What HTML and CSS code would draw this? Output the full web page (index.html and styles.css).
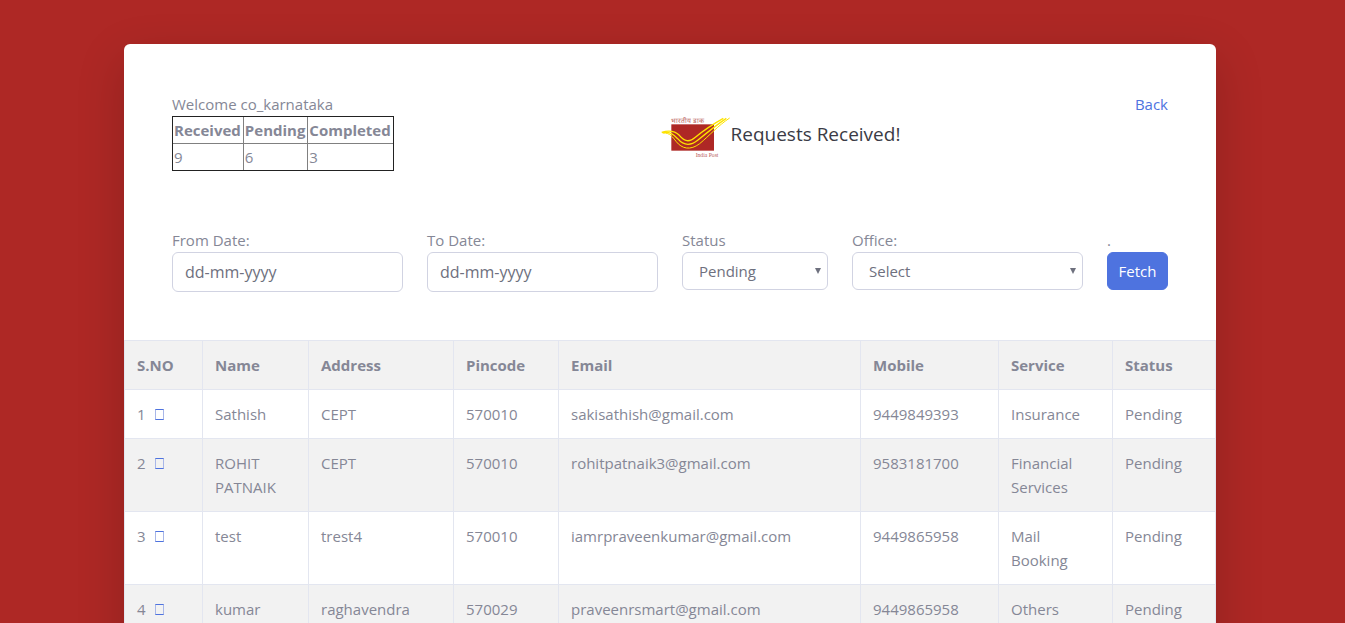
FILE: index.html
```
<!DOCTYPE html>
<html lang="en">
<head>
  <meta charset="utf-8">
  <meta name="viewport" content="width=device-width, initial-scale=1">
  <title>Requests Received</title>
  <link rel="stylesheet" href="styles.css">
</head>
<body>
  <div class="container">
    <div class="card">
      <div class="card-header">
        <div class="summary">
          <div>Welcome co_karnataka</div>
          <table class="counts">
            <tr><th>Received</th><th>Pending</th><th>Completed</th></tr>
            <tr><td>9</td><td>6</td><td>3</td></tr>
          </table>
        </div>
        <div class="title">
          <svg class="logo" viewBox="18 18 207 129" role="img" aria-label="India Post">
            <text x="49" y="38" font-size="20" fill="#b85a58">भारतीय डाक</text>
            <rect x="49" y="43" width="128" height="79" fill="#ae2825"/>
            <g fill="none" stroke="#fde300" stroke-width="4">
              <path d="M20 67C44 60 60 63 73 76C89 95 102 98 122 81C151 57 178 40 205 25"/>
              <path d="M21 68C46 64 56 74 68 86C85 106 104 110 128 91C157 67 184 45 214 25"/>
              <path d="M24 69C46 68 53 82 63 94C81 117 106 122 134 101C164 76 188 48 224 24" stroke-width="3"/>
            </g>
            <text x="122" y="140" font-size="17" fill="#b85a58">India Post</text>
          </svg>
          <h1>Requests Received!</h1>
        </div>
        <a class="back" href="#">Back</a>
      </div>

      <form class="filters">
        <div class="field">
          <label for="fromDate">From Date:</label>
          <input id="fromDate" type="text" placeholder="dd-mm-yyyy">
        </div>
        <div class="field">
          <label for="toDate">To Date:</label>
          <input id="toDate" type="text" placeholder="dd-mm-yyyy">
        </div>
        <div class="field">
          <label for="status">Status</label>
          <div class="select-wrapper">
            <select id="status">
              <option>Pending</option>
              <option>Completed</option>
            </select>
          </div>
        </div>
        <div class="field">
          <label for="office">Office:</label>
          <div class="select-wrapper">
            <select id="office">
              <option>Select</option>
            </select>
          </div>
        </div>
        <div class="field">
          <label for="fetch">.</label>
          <button id="fetch" type="button">Fetch</button>
        </div>
      </form>

      <table class="requests">
        <colgroup>
          <col class="col-sno">
          <col class="col-name">
          <col class="col-address">
          <col class="col-pincode">
          <col class="col-email">
          <col class="col-mobile">
          <col class="col-service">
          <col>
        </colgroup>
        <tbody>
          <tr>
            <th>S.NO</th>
            <th>Name</th>
            <th>Address</th>
            <th>Pincode</th>
            <th>Email</th>
            <th>Mobile</th>
            <th>Service</th>
            <th>Status</th>
          </tr>
          <tr>
            <td>1 <a class="edit" href="#" aria-label="Edit request 1"></a></td>
            <td>Sathish</td>
            <td>CEPT</td>
            <td>570010</td>
            <td>sakisathish@gmail.com</td>
            <td>9449849393</td>
            <td>Insurance</td>
            <td>Pending</td>
          </tr>
          <tr>
            <td>2 <a class="edit" href="#" aria-label="Edit request 2"></a></td>
            <td>ROHIT PATNAIK</td>
            <td>CEPT</td>
            <td>570010</td>
            <td>rohitpatnaik3@gmail.com</td>
            <td>9583181700</td>
            <td>Financial Services</td>
            <td>Pending</td>
          </tr>
          <tr>
            <td>3 <a class="edit" href="#" aria-label="Edit request 3"></a></td>
            <td>test</td>
            <td>trest4</td>
            <td>570010</td>
            <td>iamrpraveenkumar@gmail.com</td>
            <td>9449865958</td>
            <td>Mail Booking</td>
            <td>Pending</td>
          </tr>
          <tr>
            <td>4 <a class="edit" href="#" aria-label="Edit request 4"></a></td>
            <td>kumar</td>
            <td>raghavendra</td>
            <td>570029</td>
            <td>praveenrsmart@gmail.com</td>
            <td>9449865958</td>
            <td>Others</td>
            <td>Pending</td>
          </tr>
        </tbody>
      </table>
    </div>
  </div>
</body>
</html>
```
FILE: styles.css
```
* {
  box-sizing: border-box;
}

body {
  margin: 0;
  padding: 44px 5px 48px 0;
  background: #ae2825;
  color: #858796;
  font-family: "Segoe UI", "Open Sans", "Noto Sans", sans-serif;
  font-size: 15px;
  line-height: 24px;
}

a {
  color: #4e73df;
  text-decoration: none;
}

.container {
  max-width: 1140px;
  margin: 0 auto;
  padding: 0 24px;
}

.card {
  background: #fff;
  border-radius: 6px;
  padding-bottom: 96px;
  overflow: hidden;
  box-shadow: 0 16px 48px rgba(0, 0, 0, 0.175);
}

/* Header */
.card-header {
  display: flex;
  align-items: flex-start;
  padding: 48px 48px 0;
}

.summary {
  width: 255px;
}

.counts {
  width: 222px;
  border-collapse: collapse;
  border: 1px solid #222;
}

.counts th,
.counts td {
  border: 1px inset #808080;
  padding: 1px;
  text-align: left;
}

.title {
  flex: 1;
  display: flex;
  justify-content: center;
  padding-top: 24px;
}

.logo {
  width: 69px;
  height: 43px;
  font-family: "Liberation Serif", serif;
}

h1 {
  margin: 4px 0 0;
  color: #3a3b45;
  font-size: 19px;
  font-weight: 400;
  line-height: 28px;
}

/* Filters */
.filters {
  display: grid;
  grid-template-columns: 231fr 231fr 146fr 231fr 61fr;
  gap: 24px;
  padding: 57px 48px 48px;
}

.field label {
  display: block;
}

input,
select {
  display: block;
  width: 100%;
  height: 38px;
  padding: 6px 12px;
  border: 1px solid #d1d3e2;
  border-radius: 6px;
  background: #fff;
  color: #6e707e;
  font: inherit;
}

input {
  height: 40px;
  font-size: 16px;
}

input::placeholder {
  color: #6e707e;
  opacity: 1;
}

select {
  appearance: none;
  padding-left: 16px;
}

.select-wrapper {
  position: relative;
}

.select-wrapper::after {
  content: "";
  position: absolute;
  top: 16px;
  right: 7px;
  border: 3px solid transparent;
  border-top: 6px solid #6e707e;
  border-bottom: 0;
  pointer-events: none;
}

button {
  display: block;
  width: 100%;
  height: 38px;
  padding: 0;
  border: 1px solid #4e73df;
  border-radius: 6px;
  background: #4e73df;
  color: #fff;
  font: inherit;
  cursor: pointer;
}

/* Requests table */
.requests {
  width: 100%;
  table-layout: fixed;
  border-collapse: collapse;
}

.requests th,
.requests td {
  padding: 12px;
  border: 1px solid #e3e6f0;
  text-align: left;
  vertical-align: top;
}

.requests tr:nth-child(odd) {
  background: #f2f2f2;
}

.col-sno { width: 78px; }
.col-name { width: 106px; }
.col-address { width: 145px; }
.col-pincode { width: 105px; }
.col-email { width: 302px; }
.col-mobile { width: 138px; }
.col-service { width: 114px; }

.edit {
  display: inline-block;
  width: 9px;
  height: 11px;
  margin-left: 6px;
  border: 1px solid #4e73df;
  border-left-color: #a9b7e8;
  border-right-color: #a9b7e8;
}
```
